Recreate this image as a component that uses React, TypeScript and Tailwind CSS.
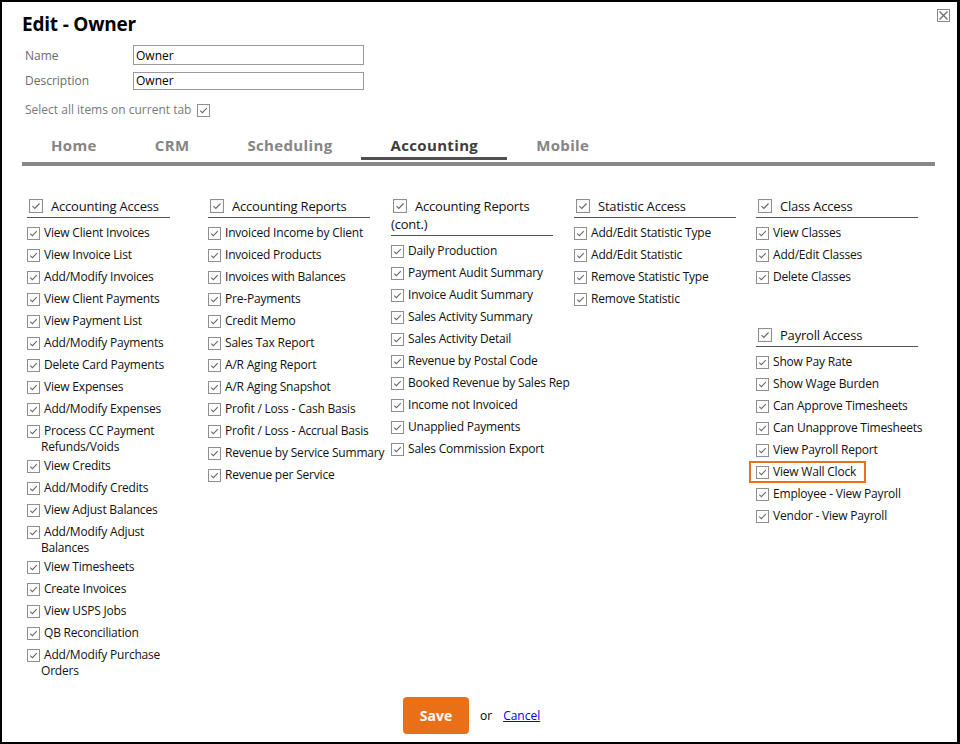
import React from 'react';

type Item = { label: React.ReactNode; mark?: boolean };
type Group = { title: React.ReactNode; items: Item[] };

const FONT = "font-['Open_Sans','Noto_Sans',sans-serif]";

const Check: React.FC<{ big?: boolean }> = ({ big }) => (
  <svg
    width={big ? 14 : 13}
    height={big ? 14 : 13}
    viewBox="0 0 13 13"
    className="shrink-0"
  >
    <rect x="0.5" y="0.5" width="12" height="12" fill="#fff" stroke="#8f8f8f" />
    <path d="M3.2 6.6 L5.4 8.7 L9.8 4.2" fill="none" stroke="#6a6a6a" strokeWidth="1.1" />
  </svg>
);

const Row: React.FC<{ item: Item }> = ({ item }) => (
  <div className="relative flex items-start gap-[4px] min-h-[22px]">
    {item.mark && (
      <span className="absolute left-[-7px] top-0 w-[117px] h-[22px] border-2 border-[#e8711a]" />
    )}
    <span className="mt-[5px]">
      <Check />
    </span>
    <span className="pt-[3px] leading-[16px] whitespace-nowrap [text-indent:3px] -ml-[3px]">
      {item.label}
    </span>
  </div>
);

const Block: React.FC<{ group: Group; width: number; className?: string }> = ({
  group,
  width,
  className,
}) => (
  <div className={className}>
    <div
      className="flex items-start gap-[8px] pl-[2px] pb-[2px] border-b border-[#555] text-[13px] leading-[18px] text-[#111]"
      style={{ width }}
    >
      <span className="mt-[2px]">
        <Check big />
      </span>
      <span>{group.title}</span>
    </div>
    <div className="mt-[4px] text-[12px] text-[#111]">
      {group.items.map((it, i) => (
        <Row key={i} item={it} />
      ))}
    </div>
  </div>
);

const L = (s: string): Item => ({ label: s });
const W = (a: string, b: string): Item => ({
  label: (
    <>
      {a}
      <br />
      {b}
    </>
  ),
});

const accountingAccess: Group = {
  title: 'Accounting Access',
  items: [
    L('View Client Invoices'),
    L('View Invoice List'),
    L('Add/Modify Invoices'),
    L('View Client Payments'),
    L('View Payment List'),
    L('Add/Modify Payments'),
    L('Delete Card Payments'),
    L('View Expenses'),
    L('Add/Modify Expenses'),
    W('Process CC Payment', 'Refunds/Voids'),
    L('View Credits'),
    L('Add/Modify Credits'),
    L('View Adjust Balances'),
    W('Add/Modify Adjust', 'Balances'),
    L('View Timesheets'),
    L('Create Invoices'),
    L('View USPS Jobs'),
    L('QB Reconciliation'),
    W('Add/Modify Purchase', 'Orders'),
  ],
};

const accountingReports: Group = {
  title: 'Accounting Reports',
  items: [
    'Invoiced Income by Client',
    'Invoiced Products',
    'Invoices with Balances',
    'Pre-Payments',
    'Credit Memo',
    'Sales Tax Report',
    'A/R Aging Report',
    'A/R Aging Snapshot',
    'Profit / Loss - Cash Basis',
    'Profit / Loss - Accrual Basis',
    'Revenue by Service Summary',
    'Revenue per Service',
  ].map(L),
};

const accountingReportsCont: Group = {
  title: (
    <>
      Accounting Reports
      <br />
      <span className="-ml-[24px]">(cont.)</span>
    </>
  ),
  items: [
    'Daily Production',
    'Payment Audit Summary',
    'Invoice Audit Summary',
    'Sales Activity Summary',
    'Sales Activity Detail',
    'Revenue by Postal Code',
    'Booked Revenue by Sales Rep',
    'Income not Invoiced',
    'Unapplied Payments',
    'Sales Commission Export',
  ].map(L),
};

const statisticAccess: Group = {
  title: 'Statistic Access',
  items: ['Add/Edit Statistic Type', 'Add/Edit Statistic', 'Remove Statistic Type', 'Remove Statistic'].map(L),
};

const classAccess: Group = {
  title: 'Class Access',
  items: ['View Classes', 'Add/Edit Classes', 'Delete Classes'].map(L),
};

const payrollAccess: Group = {
  title: 'Payroll Access',
  items: [
    L('Show Pay Rate'),
    L('Show Wage Burden'),
    L('Can Approve Timesheets'),
    L('Can Unapprove Timesheets'),
    L('View Payroll Report'),
    { label: 'View Wall Clock', mark: true },
    L('Employee - View Payroll'),
    L('Vendor - View Payroll'),
  ],
};

const tabs = ['Home', 'CRM', 'Scheduling', 'Accounting', 'Mobile'];

const App: React.FC = () => {
  return (
    <div
      className={`${FONT} relative w-[960px] h-[744px] bg-white border-2 border-r-[3px] border-black overflow-hidden`}
    >
      {/* close */}
      <div className="absolute right-[7px] top-[7px] w-[13px] h-[13px] border border-[#8a8a8a] flex items-center justify-center">
        <svg width="11" height="11" viewBox="0 0 11 11">
          <path d="M1.5 1.5 L9.5 9.5 M9.5 1.5 L1.5 9.5" stroke="#6f6f6f" strokeWidth="1.3" />
        </svg>
      </div>

      <div className="pl-[20px] pt-[10px]">
        <h1 className="text-[19px] leading-[24px] font-bold text-black tracking-[-0.2px]">
          Edit - Owner
        </h1>

        {/* name / description */}
        <div className="mt-[9px] flex flex-col gap-[6px] text-[12px]">
          <div className="flex items-center">
            <label className="w-[111px] pl-[3px] pt-[1px] text-[#6b6b6b]">Name</label>
            <input
              readOnly
              value="Owner"
              className="w-[231px] h-[20px] border border-[#9a9a9a] px-[2px] text-[12px] text-black outline-none"
            />
          </div>
          <div className="flex items-center">
            <label className="w-[111px] pl-[3px] pt-[1px] text-[#6b6b6b]">Description</label>
            <input
              readOnly
              value="Owner"
              className="w-[231px] h-[18px] border border-[#9a9a9a] px-[2px] text-[12px] text-black outline-none"
            />
          </div>
        </div>

        <div className="mt-[11px] pl-[3px] flex items-center gap-[6px] text-[12px] text-[#7a7a7a]">
          <span>Select all items on current tab</span>
          <Check />
        </div>

        {/* tabs */}
        <div className="mt-[16px] w-[913px]">
          <div className="flex">
            {tabs.map((t) => {
              const active = t === 'Accounting';
              return (
                <div
                  key={t}
                  className={`px-[29px] pb-[2px] text-[15px] font-bold leading-[20px] tracking-[0.35px] border-b-[3px] ${
                    active ? 'text-[#3d3d3d] border-[#505050]' : 'text-[#858585] border-transparent'
                  }`}
                >
                  {t}
                </div>
              );
            })}
          </div>
          <div className="mt-[2px] h-[4px] bg-[#888888]" />
        </div>

        {/* permission columns */}
        <div className="mt-[31px] pl-[5px] flex items-start gap-[20px] tracking-[-0.2px]">
          <Block group={accountingAccess} width={143} className="w-[161px]" />
          <Block group={accountingReports} width={162} className="w-[163px]" />
          <Block group={accountingReportsCont} width={162} className="w-[163px]" />
          <Block group={statisticAccess} width={162} className="w-[162px]" />
          <div className="w-[163px]">
            <Block group={classAccess} width={162} />
            <Block group={payrollAccess} width={162} className="mt-[38px]" />
          </div>
        </div>
      </div>

      {/* footer */}
      <div className="absolute left-0 bottom-[8px] flex items-center gap-[11px] text-[12px] pl-[401px]">
        <button className="w-[66px] h-[37px] rounded-[4px] bg-[#ea7018] text-white font-bold text-[14px]">
          Save
        </button>
        <span className="text-black">or</span>
        <a href="#" className="text-[#0000ee] underline">
          Cancel
        </a>
      </div>
    </div>
  );
};

export default App;
